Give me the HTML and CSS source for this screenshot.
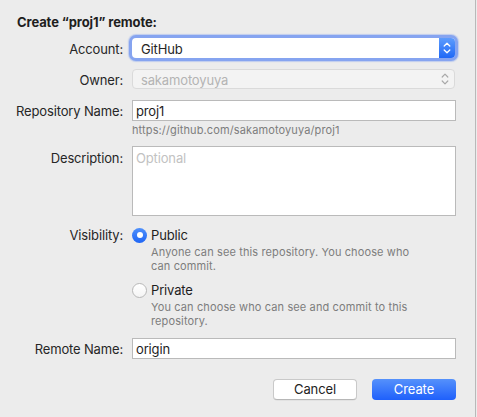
FILE: index.html
```html
<!DOCTYPE html>
<html>
<head>
<meta charset="utf-8">
<link rel="stylesheet" href="styles.css">
</head>
<body>
<div class="window">
  <h1 class="title">Create “proj1” remote:</h1>

  <div class="row row-account">
    <span class="lbl">Account:</span>
    <div class="popup focused">
      <span class="popup-text">GitHub</span>
      <span class="stepper blue">
        <svg width="8" height="14" viewBox="0 0 8 14"><path d="M1.2 5 L4 2.2 L6.8 5 M1.2 9 L4 11.8 L6.8 9" fill="none" stroke="#fff" stroke-width="1.3" stroke-linecap="round" stroke-linejoin="round"/></svg>
      </span>
    </div>
  </div>

  <div class="row row-owner">
    <span class="lbl">Owner:</span>
    <div class="popup disabled">
      <span class="popup-text">sakamotoyuya</span>
      <span class="stepper">
        <svg width="8" height="14" viewBox="0 0 8 14"><path d="M1.2 5 L4 2.2 L6.8 5 M1.2 9 L4 11.8 L6.8 9" fill="none" stroke="#a8a8a8" stroke-width="1.2" stroke-linecap="round" stroke-linejoin="round"/></svg>
      </span>
    </div>
  </div>

  <div class="row row-repo">
    <span class="lbl">Repository Name:</span>
    <div class="field">proj1</div>
  </div>
  <div class="row row-hint">
    <span class="lbl"></span>
    <div class="hint">https://github.com/sakamotoyuya/proj1</div>
  </div>

  <div class="row row-desc">
    <span class="lbl lbl-top">Description:</span>
    <div class="textarea"><span class="placeholder">Optional</span></div>
  </div>

  <div class="row row-vis">
    <span class="lbl lbl-top">Visibility:</span>
    <div class="radios">
      <div class="radio-line">
        <span class="radio on"><span class="dot"></span></span>
        <span class="radio-label">Public</span>
      </div>
      <div class="radio-desc">Anyone can see this repository. You choose who<br>can commit.</div>
      <div class="radio-line second">
        <span class="radio"></span>
        <span class="radio-label">Private</span>
      </div>
      <div class="radio-desc">You can choose who can see and commit to this<br>repository.</div>
    </div>
  </div>

  <div class="row row-remote">
    <span class="lbl">Remote Name:</span>
    <div class="field">origin</div>
  </div>

  <div class="buttons">
    <button class="btn cancel">Cancel</button>
    <button class="btn primary">Create</button>
  </div>
</div>
</body>
</html>
```

FILE: styles.css
```css
html, body {
  margin: 0;
  padding: 0;
  background: #ececec;
}
body {
  font-family: "Inter", "Roboto", "Liberation Sans", sans-serif;
  font-size: 13px;
  color: #262626;
  letter-spacing: -0.15px;
}
.window {
  width: 475px;
  height: 415px;
  background: #ececec;
  border-right: 1px solid #b9b9b9;
  border-bottom: 1px solid #b3b3b3;
  padding-top: 14px;
  box-sizing: content-box;
}
.title {
  margin: 0 0 0 17px;
  font-size: 13px;
  line-height: 16px;
  font-weight: 700;
  color: #1e1e1e;
  height: 16px;
  letter-spacing: -0.1px;
}
.row {
  display: flex;
  align-items: center;
}
.lbl {
  width: 123px;
  flex: none;
  text-align: right;
  margin-right: 9px;
  line-height: 16px;
  padding-top: 1px;
}
.lbl-top {
  align-self: flex-start;
}
.row-account { margin-top: 8px; }
.row-owner { margin-top: 11px; }
.row-repo { margin-top: 11px; }
.row-hint { margin-top: 2px; }
.row-desc { margin-top: 9px; }
.row-vis { margin-top: 11px; align-items: flex-start; }
.row-remote { margin-top: 10px; }

.popup {
  width: 323px;
  height: 20px;
  box-sizing: border-box;
  border-radius: 4px;
  display: flex;
  align-items: center;
}
.popup-text {
  flex: 1;
  padding-left: 9px;
  line-height: 16px;
  padding-top: 1px;
}
.popup.focused {
  background: #fff;
  box-shadow: 0 0 0 3px #86a4f0, 0 0 1px 4px rgba(134,164,240,0.45);
}
.popup.disabled {
  background: #f3f3f3;
  border: 1px solid #dadada;
  color: #b4b4b4;
}
.popup.disabled .popup-text { padding-left: 8px; }
.stepper {
  width: 16px;
  height: 100%;
  flex: none;
  display: flex;
  align-items: center;
  justify-content: center;
}
.stepper.blue {
  background: linear-gradient(#5d9cfd, #1f68f6);
  border-radius: 0 4px 4px 0;
}
.popup.disabled .stepper { width: 18px; }

.field {
  width: 324px;
  height: 21px;
  box-sizing: border-box;
  background: #fff;
  border: 1px solid #bababa;
  padding: 1px 3px 0;
  line-height: 18px;
  color: #1e1e1e;
}
.hint {
  font-size: 11px;
  line-height: 14px;
  color: #7d7d7d;
  letter-spacing: 0.12px;
}
.lbl-top { padding-top: 4px; }
.row-vis .lbl-top { padding-top: 0; }
.textarea {
  width: 324px;
  height: 70px;
  box-sizing: border-box;
  background: #fff;
  border: 1px solid #bababa;
  padding: 3px 3px 0;
  line-height: 16px;
}
.placeholder { color: #c2c2c2; }

.radios { display: flex; flex-direction: column; }
.radio-line {
  display: flex;
  align-items: center;
  height: 16px;
  line-height: 16px;
}
.radio-line.second { margin-top: 9px; }
.radio {
  width: 15px;
  height: 15px;
  box-sizing: border-box;
  border-radius: 50%;
  margin-right: 4px;
  background: linear-gradient(#ffffff, #f4f4f4);
  border: 1px solid #b8b8b8;
  display: flex;
  align-items: center;
  justify-content: center;
}
.radio.on {
  background: linear-gradient(#4f90fb, #1f66f5);
  border: none;
}
.dot {
  width: 6px;
  height: 6px;
  border-radius: 50%;
  background: #fff;
}
.radio-label { color: #1e1e1e; }
.radio-desc {
  margin-top: 2px;
  padding-left: 19px;
  font-size: 11px;
  line-height: 14px;
  color: #7d7d7d;
  letter-spacing: 0.12px;
}

.buttons {
  display: flex;
  justify-content: flex-end;
  gap: 15px;
  margin-top: 20px;
  padding-right: 19px;
}
.btn {
  font-family: inherit;
  font-size: 13px;
  letter-spacing: -0.1px;
  width: 84px;
  height: 21px;
  border-radius: 4px;
  padding: 0;
  line-height: 19px;
  box-sizing: border-box;
}
.btn.cancel {
  background: #fff;
  color: #222;
  border: 1px solid #c9c9c9;
  border-bottom-color: #b7b7b7;
  box-shadow: 0 0.5px 0.5px rgba(0,0,0,0.08);
}
.btn.primary {
  background: linear-gradient(#5591fb, #1f60fb);
  color: #fff;
  border: none;
}
```
